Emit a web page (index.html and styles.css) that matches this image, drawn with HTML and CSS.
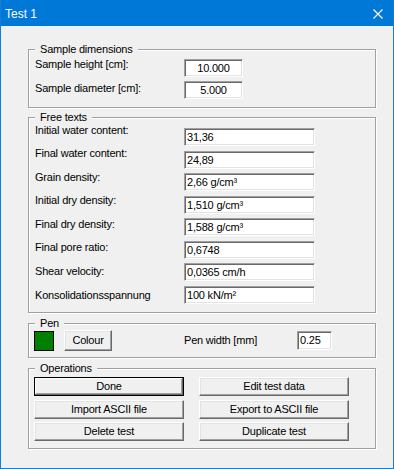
FILE: index.html
```html
<!DOCTYPE html>
<html lang="en">
<head>
    <meta charset="UTF-8">
    <meta name="viewport" content="width=device-width, initial-scale=1.0">
    <title>Test 1</title>
    <link rel="stylesheet" href="styles.css">
</head>
<body>
    <div class="dialog">
        <div class="titlebar">
            <span class="title">Test 1</span>
            <svg class="close" width="10" height="10" viewBox="0 0 10 10">
                <path d="M0.5 0.5 L9.5 9.5 M9.5 0.5 L0.5 9.5" stroke="#fff" stroke-width="1.1" fill="none"/>
            </svg>
        </div>

        <div class="content">
            <fieldset class="group sample">
                <legend>Sample dimensions</legend>
                <div class="fields">
                    <div class="labels">
                        <span class="label">Sample height [cm]:</span>
                        <span class="label">Sample diameter [cm]:</span>
                    </div>
                    <div class="edits">
                        <div class="edit short center">10.000</div>
                        <div class="edit short center">5.000</div>
                    </div>
                </div>
            </fieldset>

            <fieldset class="group texts">
                <legend>Free texts</legend>
                <div class="fields">
                    <div class="labels">
                        <span class="label">Initial water content:</span>
                        <span class="label">Final water content:</span>
                        <span class="label">Grain density:</span>
                        <span class="label">Initial dry density:</span>
                        <span class="label">Final dry density:</span>
                        <span class="label">Final pore ratio:</span>
                        <span class="label">Shear velocity:</span>
                        <span class="label">Konsolidationsspannung</span>
                    </div>
                    <div class="edits">
                        <div class="edit long">31,36</div>
                        <div class="edit long">24,89</div>
                        <div class="edit long">2,66 g/cm³</div>
                        <div class="edit long">1,510 g/cm³</div>
                        <div class="edit long">1,588 g/cm³</div>
                        <div class="edit long">0,6748</div>
                        <div class="edit long">0,0365 cm/h</div>
                        <div class="edit long">100 kN/m²</div>
                    </div>
                </div>
            </fieldset>

            <fieldset class="group pen">
                <legend>Pen</legend>
                <div class="pen-row">
                    <div class="swatch"></div>
                    <button class="btn colour-btn">Colour</button>
                    <span class="pen-label">Pen width [mm]</span>
                    <div class="edit pen-edit">0.25</div>
                </div>
            </fieldset>

            <fieldset class="group ops">
                <legend>Operations</legend>
                <div class="ops-grid">
                    <button class="btn default">Done</button>
                    <button class="btn">Edit test data</button>
                    <button class="btn">Import ASCII file</button>
                    <button class="btn">Export to ASCII file</button>
                    <button class="btn">Delete test</button>
                    <button class="btn">Duplicate test</button>
                </div>
            </fieldset>
        </div>
    </div>
</body>
</html>
```

FILE: styles.css
```css
body {
    margin: 0;
    background: #f0f0f0;
    font-family: "Liberation Sans", Arial, sans-serif;
}
.dialog {
    width: 394px;
    height: 469px;
    box-sizing: border-box;
    border: 1px solid #0f7fd9;
    background: #f0f0f0;
    color: #000;
    font-size: 11px;
    letter-spacing: -0.2px;
}
.titlebar {
    height: 25px;
    margin-top: -1px;
    padding-top: 1px;
    background: #0078d7;
    display: flex;
    align-items: center;
    justify-content: space-between;
    padding-left: 4px;
    padding-right: 10px;
}
.title {
    color: #fff;
    font-size: 12px;
    letter-spacing: 0;
}
.close {
    display: block;
}
.content {
    padding: 17px 17px 0 27px;
}
.group {
    margin: 0;
    padding: 0 6px;
    border: 1px solid #a0a0a0;
    box-shadow: 1px 1px 0 #fff, inset 1px 1px 0 #fff;
    min-width: 0;
}
.group legend {
    padding: 0 5px;
    line-height: 13px;
    background: #f0f0f0;
}
.sample {
    padding-top: 1px;
    padding-bottom: 8px;
}
.texts {
    margin-top: 3px;
    padding-bottom: 8.5px;
}
.pen {
    margin-top: 4px;
    padding-bottom: 6px;
}
.ops {
    margin-top: 4px;
    padding-top: 2px;
    padding-bottom: 7px;
}

/* labels and edit boxes run on different pitches, as in the original dialog */
.fields {
    display: flex;
    align-items: flex-start;
}
.labels {
    width: 149px;
    flex-shrink: 0;
    display: flex;
    flex-direction: column;
}
.label {
    line-height: 13px;
    white-space: nowrap;
}
.sample .labels {
    margin-top: 1px;
    gap: 11px;
}
.texts .labels {
    margin-top: -0.5px;
    gap: 10.6px;
}
.edits {
    display: flex;
    flex-direction: column;
}
.sample .edits {
    padding-top: 2px;
    gap: 4px;
}
.texts .edits {
    padding-top: 4px;
    gap: 4.5px;
}
.edit {
    box-sizing: border-box;
    height: 18px;
    line-height: 16px;
    padding: 0 2px;
    background: #fff;
    border: 1px solid;
    border-color: #a0a0a0 #fff #fff #a0a0a0;
    box-shadow: inset 1px 1px 0 #696969, inset -1px -1px 0 #e3e3e3;
    white-space: nowrap;
}
.short {
    width: 59px;
}
.long {
    width: 131px;
}
.center {
    text-align: center;
}
.pen-row {
    display: flex;
    align-items: center;
    height: 21px;
}
.swatch {
    width: 20px;
    height: 20px;
    box-sizing: border-box;
    margin-left: -1px;
    background: #008000;
    border: 1px solid #000;
}
.colour-btn {
    width: 48px;
    height: 21px;
    margin-left: 10px;
}
.pen-label {
    margin-left: 72px;
    line-height: 13px;
}
.pen-edit {
    width: 35px;
    height: 19px;
    margin-left: 40px;
}
.btn {
    box-sizing: border-box;
    font-family: inherit;
    font-size: 11px;
    letter-spacing: -0.2px;
    color: #000;
    background: #f0f0f0;
    border: 1px solid;
    border-color: #fff #696969 #696969 #fff;
    box-shadow: inset -1px -1px 0 #a0a0a0, inset 1px 1px 0 #e3e3e3;
    padding: 0;
    line-height: 15px;
}
.btn.default {
    border: 1px solid #000;
    box-shadow: inset -1px -1px 0 #696969, inset 1px 1px 0 #fff, inset -2px -2px 0 #a0a0a0;
}
.ops-grid {
    display: grid;
    grid-template-columns: 150px 150px;
    column-gap: 15px;
    row-gap: 3.5px;
    margin-left: -1px;
}
.ops-grid .btn {
    height: 19px;
}
```
